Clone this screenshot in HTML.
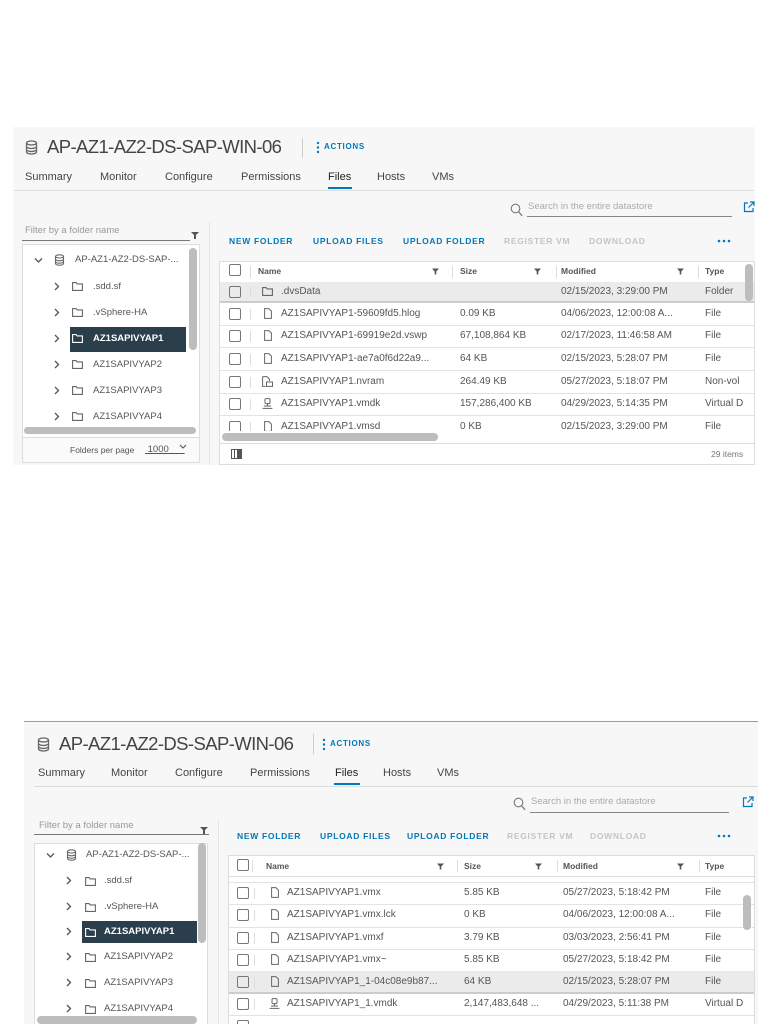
<!DOCTYPE html>
<html><head><meta charset="utf-8"><style>
*{margin:0;padding:0;box-sizing:border-box}
html,body{width:768px;height:1024px;overflow:hidden}
body{background:#fff;position:relative;font-family:"Liberation Sans",Arial,sans-serif;color:#555}
.a{position:absolute;white-space:nowrap}
.t{position:absolute;white-space:nowrap;font-size:10px;line-height:12px;color:#555}
.tab{position:absolute;white-space:nowrap;font-size:11px;line-height:14px;color:#444}
.tb{position:absolute;white-space:nowrap;font-size:8.5px;line-height:10px;font-weight:bold;letter-spacing:.7px;color:#0079b8}
.tb.g{color:#c4c4c4}
.h{position:absolute;white-space:nowrap;font-size:8.5px;line-height:10px;font-weight:bold;color:#555}
.cb{position:absolute;width:12px;height:12px;border:1px solid #777;border-radius:2px;background:#fff}
.hl{position:absolute;height:1px;background:#e3e3e3}
.vl{position:absolute;width:1px;background:#ddd}
.sb{position:absolute;background:#bdbdbd;border-radius:4px}
.ttl{position:absolute;white-space:nowrap;font-size:18.5px;line-height:22px;color:#444;letter-spacing:-0.6px}
</style></head><body>

<!-- ============ PANEL 1 ============ -->
<div class="a" style="left:13px;top:127px;width:742px;height:338px;background:#f7f7f7"></div>
<svg class="a" style="left:25px;top:140px" width="13" height="15" viewBox="0 0 13 15"><g fill="none" stroke="#666" stroke-width="1.3"><ellipse cx="6.5" cy="3" rx="5" ry="2"/><path d="M1.5 3v9c0 1.1 2.2 2 5 2s5-.9 5-2V3M1.5 6.5c0 1.1 2.2 2 5 2s5-.9 5-2M1.5 9.5c0 1.1 2.2 2 5 2s5-.9 5-2"/></g></svg>
<div class="ttl" style="left:47px;top:136px">AP-AZ1-AZ2-DS-SAP-WIN-06</div>
<div class="vl" style="left:302px;top:138px;height:20px;background:#ccc"></div>
<svg class="a" style="left:316px;top:141px" width="4" height="13"><circle cx="2" cy="2" r="1.2" fill="#0079b8"/><circle cx="2" cy="6.5" r="1.2" fill="#0079b8"/><circle cx="2" cy="11" r="1.2" fill="#0079b8"/></svg>
<div class="tb" style="left:324px;top:142px;font-size:8px">ACTIONS</div>
<div class="tab" style="left:25px;top:170px">Summary</div>
<div class="tab" style="left:100px;top:170px">Monitor</div>
<div class="tab" style="left:165px;top:170px">Configure</div>
<div class="tab" style="left:241px;top:170px">Permissions</div>
<div class="tab" style="left:328px;top:170px;color:#222">Files</div>
<div class="tab" style="left:377px;top:170px">Hosts</div>
<div class="tab" style="left:432px;top:170px">VMs</div>
<div class="a" style="left:328px;top:187px;width:24px;height:2px;background:#0079b8"></div>
<div class="hl" style="left:14px;top:190px;width:740px;background:#ddd"></div>
<svg class="a" style="left:510px;top:203px" width="13" height="14"><circle cx="5.5" cy="5.5" r="4.3" fill="none" stroke="#777" stroke-width="1.1"/><path d="M8.6 8.8l3.5 4" stroke="#777" stroke-width="1.2"/></svg>
<div class="t" style="left:528px;top:201px;color:#aaa;font-size:9.5px">Search in the entire datastore</div>
<div class="hl" style="left:527px;top:216px;width:205px;background:#888"></div>
<svg class="a" style="left:743px;top:201px" width="12" height="12"><path d="M5 2H1.5v8.5H10V7" fill="none" stroke="#0079b8" stroke-width="1.2"/><path d="M7 1h4v4M11 1L5.5 6.5" fill="none" stroke="#0079b8" stroke-width="1.2"/></svg>
<div class="t" style="left:25px;top:225px;color:#999;font-size:9.5px">Filter by a folder name</div>
<div class="hl" style="left:22px;top:240px;width:168px;background:#777"></div>
<svg class="a" style="left:191px;top:231px" width="8" height="8"><path d="M0 1h8L5 4v4H3V4z" fill="#555"/></svg>
<div class="a" style="left:22px;top:244px;width:178px;height:219px;border:1px solid #ddd;background:#fff"></div>
<div class="a" style="left:23px;top:437px;width:176px;height:25px;border-top:1px solid #ddd;background:#fafafa"></div>
<svg class="a" style="left:34px;top:257px" width="9" height="7"><path d="M1 1.5l3.5 3.5 3.5-3.5" fill="none" stroke="#555" stroke-width="1.3"/></svg>
<svg class="a" style="left:54px;top:254px" width="11" height="12" viewBox="0 0 13 15"><g fill="none" stroke="#666" stroke-width="1.4"><ellipse cx="6.5" cy="3" rx="5" ry="2"/><path d="M1.5 3v9c0 1.1 2.2 2 5 2s5-.9 5-2V3M1.5 6.5c0 1.1 2.2 2 5 2s5-.9 5-2M1.5 9.5c0 1.1 2.2 2 5 2s5-.9 5-2"/></g></svg>
<div class="t" style="left:75px;top:254px;font-size:9.5px">AP-AZ1-AZ2-DS-SAP-...</div>
<div class="a" style="left:70px;top:327px;width:116px;height:25px;background:#2b3e4b"></div>
<div class="t" style="left:70px;top:444px;font-size:8.5px">Folders per page</div>
<div class="t" style="left:145px;top:444px;font-size:9.5px;text-decoration:underline">&nbsp;1000&nbsp;&nbsp;&nbsp;&nbsp;&nbsp;&nbsp;</div>
<svg class="a" style="left:179px;top:444px" width="8" height="6"><path d="M1 1l3 3 3-3" fill="none" stroke="#555" stroke-width="1.1"/></svg>
<div class="vl" style="left:209px;top:222px;height:243px;background:#e4e4e4"></div>
<div class="tb" style="left:229px;top:236px">NEW FOLDER</div>
<div class="tb" style="left:313px;top:236px">UPLOAD FILES</div>
<div class="tb" style="left:403px;top:236px">UPLOAD FOLDER</div>
<div class="tb g" style="left:504px;top:236px">REGISTER VM</div>
<div class="tb g" style="left:589px;top:236px">DOWNLOAD</div>
<svg class="a" style="left:717px;top:239px" width="14" height="4"><circle cx="2" cy="2" r="1.3" fill="#0079b8"/><circle cx="7" cy="2" r="1.3" fill="#0079b8"/><circle cx="12" cy="2" r="1.3" fill="#0079b8"/></svg>
<div class="a" style="left:219px;top:261px;width:536px;height:204px;border:1px solid #ddd;background:#fff"></div>

<!-- ============ PANEL 2 ============ -->
<div class="a" style="left:24px;top:721px;width:734px;height:303px;background:#f7f7f7;border-top:1px solid #9aa0a6"></div>
<svg class="a" style="left:37px;top:737px" width="13" height="15" viewBox="0 0 13 15"><g fill="none" stroke="#666" stroke-width="1.3"><ellipse cx="6.5" cy="3" rx="5" ry="2"/><path d="M1.5 3v9c0 1.1 2.2 2 5 2s5-.9 5-2V3M1.5 6.5c0 1.1 2.2 2 5 2s5-.9 5-2M1.5 9.5c0 1.1 2.2 2 5 2s5-.9 5-2"/></g></svg>
<div class="ttl" style="left:59px;top:733px">AP-AZ1-AZ2-DS-SAP-WIN-06</div>
<div class="vl" style="left:313px;top:734px;height:20px;background:#ccc"></div>
<svg class="a" style="left:322px;top:738px" width="4" height="13"><circle cx="2" cy="2" r="1.2" fill="#0079b8"/><circle cx="2" cy="6.5" r="1.2" fill="#0079b8"/><circle cx="2" cy="11" r="1.2" fill="#0079b8"/></svg>
<div class="tb" style="left:330px;top:739px;font-size:8px">ACTIONS</div>
<div class="tab" style="left:38px;top:766px">Summary</div>
<div class="tab" style="left:111px;top:766px">Monitor</div>
<div class="tab" style="left:175px;top:766px">Configure</div>
<div class="tab" style="left:250px;top:766px">Permissions</div>
<div class="tab" style="left:335px;top:766px;color:#222">Files</div>
<div class="tab" style="left:383px;top:766px">Hosts</div>
<div class="tab" style="left:437px;top:766px">VMs</div>
<div class="a" style="left:334px;top:783px;width:26px;height:2px;background:#0079b8"></div>
<div class="hl" style="left:34px;top:786px;width:724px;background:#ddd"></div>
<svg class="a" style="left:513px;top:797px" width="13" height="14"><circle cx="5.5" cy="5.5" r="4.3" fill="none" stroke="#777" stroke-width="1.1"/><path d="M8.6 8.8l3.5 4" stroke="#777" stroke-width="1.2"/></svg>
<div class="t" style="left:531px;top:796px;color:#aaa;font-size:9.5px">Search in the entire datastore</div>
<div class="hl" style="left:530px;top:812px;width:199px;background:#888"></div>
<svg class="a" style="left:742px;top:796px" width="12" height="12"><path d="M5 2H1.5v8.5H10V7" fill="none" stroke="#0079b8" stroke-width="1.2"/><path d="M7 1h4v4M11 1L5.5 6.5" fill="none" stroke="#0079b8" stroke-width="1.2"/></svg>
<div class="t" style="left:39px;top:820px;color:#999;font-size:9.5px">Filter by a folder name</div>
<div class="hl" style="left:34px;top:834px;width:175px;background:#777"></div>
<svg class="a" style="left:200px;top:826px" width="8" height="8"><path d="M0 1h8L5 4v4H3V4z" fill="#555"/></svg>
<div class="a" style="left:34px;top:843px;width:174px;height:181px;border:1px solid #ddd;border-bottom:none;background:#fff"></div>
<svg class="a" style="left:46px;top:852px" width="9" height="7"><path d="M1 1.5l3.5 3.5 3.5-3.5" fill="none" stroke="#555" stroke-width="1.3"/></svg>
<svg class="a" style="left:66px;top:849px" width="11" height="12" viewBox="0 0 13 15"><g fill="none" stroke="#666" stroke-width="1.4"><ellipse cx="6.5" cy="3" rx="5" ry="2"/><path d="M1.5 3v9c0 1.1 2.2 2 5 2s5-.9 5-2V3M1.5 6.5c0 1.1 2.2 2 5 2s5-.9 5-2M1.5 9.5c0 1.1 2.2 2 5 2s5-.9 5-2"/></g></svg>
<div class="t" style="left:86px;top:849px;font-size:9.5px">AP-AZ1-AZ2-DS-SAP-...</div>
<div class="a" style="left:82px;top:921px;width:115px;height:22px;background:#2b3e4b"></div>
<div class="sb" style="left:198px;top:843px;width:8px;height:100px"></div>
<div class="vl" style="left:218px;top:820px;height:204px;background:#e4e4e4"></div>
<div class="tb" style="left:237px;top:831px">NEW FOLDER</div>
<div class="tb" style="left:320px;top:831px">UPLOAD FILES</div>
<div class="tb" style="left:407px;top:831px">UPLOAD FOLDER</div>
<div class="tb g" style="left:507px;top:831px">REGISTER VM</div>
<div class="tb g" style="left:590px;top:831px">DOWNLOAD</div>
<svg class="a" style="left:717px;top:834px" width="14" height="4"><circle cx="2" cy="2" r="1.3" fill="#0079b8"/><circle cx="7" cy="2" r="1.3" fill="#0079b8"/><circle cx="12" cy="2" r="1.3" fill="#0079b8"/></svg>
<div class="a" style="left:228px;top:855px;width:527px;height:169px;border:1px solid #ddd;border-bottom:none;background:#fff"></div>

<!-- tree 1 rows -->
<svg class="a" style="left:54px;top:282px" width="6" height="9"><path d="M1 1l3.5 3.5L1 8" fill="none" stroke="#555" stroke-width="1.3"/></svg>
<svg class="a" style="left:72px;top:282px" width="11" height="9"><path d="M.6 .6h3.5l1 1.3h5.3v6.5H.6z" fill="none" stroke="#666" stroke-width="1.1"/></svg>
<div class="t" style="left:93px;top:281px;font-size:9.5px">.sdd.sf</div>
<svg class="a" style="left:54px;top:308px" width="6" height="9"><path d="M1 1l3.5 3.5L1 8" fill="none" stroke="#555" stroke-width="1.3"/></svg>
<svg class="a" style="left:72px;top:308px" width="11" height="9"><path d="M.6 .6h3.5l1 1.3h5.3v6.5H.6z" fill="none" stroke="#666" stroke-width="1.1"/></svg>
<div class="t" style="left:93px;top:307px;font-size:9.5px">.vSphere-HA</div>
<svg class="a" style="left:54px;top:334px" width="6" height="9"><path d="M1 1l3.5 3.5L1 8" fill="none" stroke="#555" stroke-width="1.3"/></svg>
<svg class="a" style="left:72px;top:334px" width="11" height="9"><path d="M.6 .6h3.5l1 1.3h5.3v6.5H.6z" fill="none" stroke="#fff" stroke-width="1.1"/></svg>
<div class="t" style="left:93px;top:333px;font-size:9.5px;color:#fff;font-weight:bold">AZ1SAPIVYAP1</div>
<svg class="a" style="left:54px;top:360px" width="6" height="9"><path d="M1 1l3.5 3.5L1 8" fill="none" stroke="#555" stroke-width="1.3"/></svg>
<svg class="a" style="left:72px;top:360px" width="11" height="9"><path d="M.6 .6h3.5l1 1.3h5.3v6.5H.6z" fill="none" stroke="#666" stroke-width="1.1"/></svg>
<div class="t" style="left:93px;top:359px;font-size:9.5px">AZ1SAPIVYAP2</div>
<svg class="a" style="left:54px;top:386px" width="6" height="9"><path d="M1 1l3.5 3.5L1 8" fill="none" stroke="#555" stroke-width="1.3"/></svg>
<svg class="a" style="left:72px;top:386px" width="11" height="9"><path d="M.6 .6h3.5l1 1.3h5.3v6.5H.6z" fill="none" stroke="#666" stroke-width="1.1"/></svg>
<div class="t" style="left:93px;top:385px;font-size:9.5px">AZ1SAPIVYAP3</div>
<svg class="a" style="left:54px;top:412px" width="6" height="9"><path d="M1 1l3.5 3.5L1 8" fill="none" stroke="#555" stroke-width="1.3"/></svg>
<svg class="a" style="left:72px;top:412px" width="11" height="9"><path d="M.6 .6h3.5l1 1.3h5.3v6.5H.6z" fill="none" stroke="#666" stroke-width="1.1"/></svg>
<div class="t" style="left:93px;top:411px;font-size:9.5px">AZ1SAPIVYAP4</div>
<div class="a" style="left:23px;top:424px;width:176px;height:13px;background:#fff"></div>
<div class="sb" style="left:24px;top:427px;width:172px;height:7px"></div>
<div class="sb" style="left:189px;top:248px;width:8px;height:102px"></div>

<!-- tree 2 rows -->
<svg class="a" style="left:66px;top:876px" width="6" height="9"><path d="M1 1l3.5 3.5L1 8" fill="none" stroke="#555" stroke-width="1.3"/></svg>
<svg class="a" style="left:85px;top:877px" width="11" height="9"><path d="M.6 .6h3.5l1 1.3h5.3v6.5H.6z" fill="none" stroke="#666" stroke-width="1.1"/></svg>
<div class="t" style="left:104px;top:875px;font-size:9.5px">.sdd.sf</div>
<svg class="a" style="left:66px;top:902px" width="6" height="9"><path d="M1 1l3.5 3.5L1 8" fill="none" stroke="#555" stroke-width="1.3"/></svg>
<svg class="a" style="left:85px;top:903px" width="11" height="9"><path d="M.6 .6h3.5l1 1.3h5.3v6.5H.6z" fill="none" stroke="#666" stroke-width="1.1"/></svg>
<div class="t" style="left:104px;top:901px;font-size:9.5px">.vSphere-HA</div>
<svg class="a" style="left:66px;top:927px" width="6" height="9"><path d="M1 1l3.5 3.5L1 8" fill="none" stroke="#555" stroke-width="1.3"/></svg>
<svg class="a" style="left:85px;top:928px" width="11" height="9"><path d="M.6 .6h3.5l1 1.3h5.3v6.5H.6z" fill="none" stroke="#fff" stroke-width="1.1"/></svg>
<div class="t" style="left:104px;top:926px;font-size:9.5px;color:#fff;font-weight:bold">AZ1SAPIVYAP1</div>
<svg class="a" style="left:66px;top:952px" width="6" height="9"><path d="M1 1l3.5 3.5L1 8" fill="none" stroke="#555" stroke-width="1.3"/></svg>
<svg class="a" style="left:85px;top:953px" width="11" height="9"><path d="M.6 .6h3.5l1 1.3h5.3v6.5H.6z" fill="none" stroke="#666" stroke-width="1.1"/></svg>
<div class="t" style="left:104px;top:951px;font-size:9.5px">AZ1SAPIVYAP2</div>
<svg class="a" style="left:66px;top:978px" width="6" height="9"><path d="M1 1l3.5 3.5L1 8" fill="none" stroke="#555" stroke-width="1.3"/></svg>
<svg class="a" style="left:85px;top:979px" width="11" height="9"><path d="M.6 .6h3.5l1 1.3h5.3v6.5H.6z" fill="none" stroke="#666" stroke-width="1.1"/></svg>
<div class="t" style="left:104px;top:977px;font-size:9.5px">AZ1SAPIVYAP3</div>
<svg class="a" style="left:66px;top:1004px" width="6" height="9"><path d="M1 1l3.5 3.5L1 8" fill="none" stroke="#555" stroke-width="1.3"/></svg>
<svg class="a" style="left:85px;top:1005px" width="11" height="9"><path d="M.6 .6h3.5l1 1.3h5.3v6.5H.6z" fill="none" stroke="#666" stroke-width="1.1"/></svg>
<div class="t" style="left:104px;top:1003px;font-size:9.5px">AZ1SAPIVYAP4</div>
<div class="sb" style="left:37px;top:1016px;width:160px;height:8px"></div>

<!-- TABLE 1 content -->
<div class="a" style="left:220px;top:262px;width:534px;height:202px;overflow:hidden">
 <div style="position:absolute;left:-220px;top:-262px;width:768px;height:464px">
  <div class="cb" style="left:229px;top:264px"></div>
  <div class="vl" style="left:250px;top:266px;height:12px"></div>
  <div class="h" style="left:258px;top:266px">Name</div>
  <svg class="a" style="left:432px;top:268px" width="7" height="7"><path d="M0 .5h7L4.3 3.5v3H2.7v-3z" fill="#555"/></svg>
  <div class="vl" style="left:452px;top:266px;height:12px"></div>
  <div class="h" style="left:460px;top:266px">Size</div>
  <svg class="a" style="left:534px;top:268px" width="7" height="7"><path d="M0 .5h7L4.3 3.5v3H2.7v-3z" fill="#555"/></svg>
  <div class="vl" style="left:556px;top:266px;height:12px"></div>
  <div class="h" style="left:561px;top:266px">Modified</div>
  <svg class="a" style="left:677px;top:268px" width="7" height="7"><path d="M0 .5h7L4.3 3.5v3H2.7v-3z" fill="#555"/></svg>
  <div class="vl" style="left:698px;top:266px;height:12px"></div>
  <div class="h" style="left:705px;top:266px">Type</div>
  <div class="hl" style="left:219px;top:282px;width:536px"></div>
  <div class="a" style="left:219px;top:282px;width:536px;height:21px;background:#ebebeb;border-bottom:2px solid #ccc"></div>
  <div class="cb" style="left:229px;top:286px;background:#ebebeb"></div><div class="vl" style="left:250px;top:287px;height:11px"></div>
  <svg class="a" style="left:262px;top:287px" width="11" height="9"><path d="M.6 .6h3.5l1 1.3h5.3v6.5H.6z" fill="none" stroke="#666" stroke-width="1.1"/></svg>
  <div class="t" style="left:281px;top:286px">.dvsData</div>
  <div class="t" style="left:561px;top:286px">02/15/2023, 3:29:00 PM</div>
  <div class="t" style="left:705px;top:286px">Folder</div>

  <div class="cb" style="left:229px;top:308px"></div><div class="vl" style="left:250px;top:309px;height:11px"></div>
  <svg class="a" style="left:264px;top:308px" width="8" height="11"><path d="M.6.6h4.3l2.5 2.5v7.3H.6z" fill="none" stroke="#666" stroke-width="1"/></svg>
  <div class="t" style="left:281px;top:308px">AZ1SAPIVYAP1-59609fd5.hlog</div>
  <div class="t" style="left:460px;top:308px">0.09 KB</div>
  <div class="t" style="left:561px;top:308px">04/06/2023, 12:00:08 A...</div>
  <div class="t" style="left:705px;top:308px">File</div>
  <div class="hl" style="left:219px;top:325px;width:536px"></div>

  <div class="cb" style="left:229px;top:330px"></div><div class="vl" style="left:250px;top:331px;height:11px"></div>
  <svg class="a" style="left:264px;top:330px" width="8" height="11"><path d="M.6.6h4.3l2.5 2.5v7.3H.6z" fill="none" stroke="#666" stroke-width="1"/></svg>
  <div class="t" style="left:281px;top:330px">AZ1SAPIVYAP1-69919e2d.vswp</div>
  <div class="t" style="left:460px;top:330px">67,108,864 KB</div>
  <div class="t" style="left:561px;top:330px">02/17/2023, 11:46:58 AM</div>
  <div class="t" style="left:705px;top:330px">File</div>
  <div class="hl" style="left:219px;top:347px;width:536px"></div>

  <div class="cb" style="left:229px;top:353px"></div><div class="vl" style="left:250px;top:354px;height:11px"></div>
  <svg class="a" style="left:264px;top:353px" width="8" height="11"><path d="M.6.6h4.3l2.5 2.5v7.3H.6z" fill="none" stroke="#666" stroke-width="1"/></svg>
  <div class="t" style="left:281px;top:353px">AZ1SAPIVYAP1-ae7a0f6d22a9...</div>
  <div class="t" style="left:460px;top:353px">64 KB</div>
  <div class="t" style="left:561px;top:353px">02/15/2023, 5:28:07 PM</div>
  <div class="t" style="left:705px;top:353px">File</div>
  <div class="hl" style="left:219px;top:370px;width:536px"></div>

  <div class="cb" style="left:229px;top:376px"></div><div class="vl" style="left:250px;top:377px;height:11px"></div>
  <svg class="a" style="left:262px;top:376px" width="11" height="11"><path d="M.6.6h4.3l2.5 2.5v2M.6.6v9.8h3" fill="none" stroke="#666" stroke-width="1"/><rect x="4.5" y="6" width="6" height="4.4" fill="none" stroke="#666" stroke-width="1"/></svg>
  <div class="t" style="left:281px;top:376px">AZ1SAPIVYAP1.nvram</div>
  <div class="t" style="left:460px;top:376px">264.49 KB</div>
  <div class="t" style="left:561px;top:376px">05/27/2023, 5:18:07 PM</div>
  <div class="t" style="left:705px;top:376px">Non-vol</div>
  <div class="hl" style="left:219px;top:393px;width:536px"></div>

  <div class="cb" style="left:229px;top:398px"></div><div class="vl" style="left:250px;top:399px;height:11px"></div>
  <svg class="a" style="left:262px;top:398px" width="11" height="11"><rect x="3" y=".6" width="5" height="5" rx="1" fill="none" stroke="#666" stroke-width="1"/><path d="M5.5 5.6v2M.6 10.4h9.8M2 8h7" fill="none" stroke="#666" stroke-width="1"/></svg>
  <div class="t" style="left:281px;top:398px">AZ1SAPIVYAP1.vmdk</div>
  <div class="t" style="left:460px;top:398px">157,286,400 KB</div>
  <div class="t" style="left:561px;top:398px">04/29/2023, 5:14:35 PM</div>
  <div class="t" style="left:705px;top:398px">Virtual D</div>
  <div class="hl" style="left:219px;top:415px;width:536px"></div>

  <div class="cb" style="left:229px;top:421px"></div><div class="vl" style="left:250px;top:422px;height:11px"></div>
  <svg class="a" style="left:264px;top:421px" width="8" height="11"><path d="M.6.6h4.3l2.5 2.5v7.3H.6z" fill="none" stroke="#666" stroke-width="1"/></svg>
  <div class="t" style="left:281px;top:421px">AZ1SAPIVYAP1.vmsd</div>
  <div class="t" style="left:460px;top:421px">0 KB</div>
  <div class="t" style="left:561px;top:421px">02/15/2023, 3:29:00 PM</div>
  <div class="t" style="left:705px;top:421px">File</div>

  <div class="a" style="left:219px;top:431px;width:536px;height:12px;background:#fff"></div>
  <div class="sb" style="left:222px;top:433px;width:216px;height:8px"></div>
  <div class="a" style="left:219px;top:443px;width:536px;height:21px;border-top:1px solid #ddd;background:#fff"></div>
  <svg class="a" style="left:231px;top:449px" width="11" height="10"><rect x=".5" y=".5" width="10" height="9" fill="none" stroke="#555"/><rect x="6" y="1" width="4" height="8" fill="#555"/><path d="M3.5 1v8" stroke="#555"/></svg>
  <div class="t" style="left:711px;top:448px;font-size:8.5px;color:#777">29 items</div>
  <div class="sb" style="left:745px;top:264px;width:8px;height:37px"></div>
 </div>
</div>

<!-- TABLE 2 content -->
<div class="a" style="left:229px;top:856px;width:525px;height:168px;overflow:hidden">
 <div style="position:absolute;left:-229px;top:-856px;width:768px;height:1024px">
  <div class="cb" style="left:237px;top:859px"></div>
  <div class="vl" style="left:252px;top:860px;height:12px"></div>
  <div class="h" style="left:266px;top:861px">Name</div>
  <svg class="a" style="left:437px;top:863px" width="7" height="7"><path d="M0 .5h7L4.3 3.5v3H2.7v-3z" fill="#555"/></svg>
  <div class="vl" style="left:457px;top:860px;height:12px"></div>
  <div class="h" style="left:464px;top:861px">Size</div>
  <svg class="a" style="left:535px;top:863px" width="7" height="7"><path d="M0 .5h7L4.3 3.5v3H2.7v-3z" fill="#555"/></svg>
  <div class="vl" style="left:557px;top:860px;height:12px"></div>
  <div class="h" style="left:563px;top:861px">Modified</div>
  <svg class="a" style="left:677px;top:863px" width="7" height="7"><path d="M0 .5h7L4.3 3.5v3H2.7v-3z" fill="#555"/></svg>
  <div class="vl" style="left:699px;top:860px;height:12px"></div>
  <div class="h" style="left:705px;top:861px">Type</div>
  <div class="hl" style="left:228px;top:876px;width:527px;background:#ddd"></div>
  <div class="hl" style="left:228px;top:882px;width:527px"></div>

  <div class="cb" style="left:237px;top:887px"></div><div class="vl" style="left:254px;top:888px;height:11px"></div>
  <svg class="a" style="left:271px;top:887px" width="8" height="11"><path d="M.6.6h4.3l2.5 2.5v7.3H.6z" fill="none" stroke="#666" stroke-width="1"/></svg>
  <div class="t" style="left:287px;top:887px">AZ1SAPIVYAP1.vmx</div>
  <div class="t" style="left:464px;top:887px">5.85 KB</div>
  <div class="t" style="left:563px;top:887px">05/27/2023, 5:18:42 PM</div>
  <div class="t" style="left:705px;top:887px">File</div>
  <div class="hl" style="left:228px;top:904px;width:527px"></div>

  <div class="cb" style="left:237px;top:909px"></div><div class="vl" style="left:254px;top:910px;height:11px"></div>
  <svg class="a" style="left:271px;top:909px" width="8" height="11"><path d="M.6.6h4.3l2.5 2.5v7.3H.6z" fill="none" stroke="#666" stroke-width="1"/></svg>
  <div class="t" style="left:287px;top:909px">AZ1SAPIVYAP1.vmx.lck</div>
  <div class="t" style="left:464px;top:909px">0 KB</div>
  <div class="t" style="left:563px;top:909px">04/06/2023, 12:00:08 A...</div>
  <div class="t" style="left:705px;top:909px">File</div>
  <div class="hl" style="left:228px;top:927px;width:527px"></div>

  <div class="cb" style="left:237px;top:932px"></div><div class="vl" style="left:254px;top:933px;height:11px"></div>
  <svg class="a" style="left:271px;top:932px" width="8" height="11"><path d="M.6.6h4.3l2.5 2.5v7.3H.6z" fill="none" stroke="#666" stroke-width="1"/></svg>
  <div class="t" style="left:287px;top:932px">AZ1SAPIVYAP1.vmxf</div>
  <div class="t" style="left:464px;top:932px">3.79 KB</div>
  <div class="t" style="left:563px;top:932px">03/03/2023, 2:56:41 PM</div>
  <div class="t" style="left:705px;top:932px">File</div>
  <div class="hl" style="left:228px;top:949px;width:527px"></div>

  <div class="cb" style="left:237px;top:954px"></div><div class="vl" style="left:254px;top:955px;height:11px"></div>
  <svg class="a" style="left:271px;top:954px" width="8" height="11"><path d="M.6.6h4.3l2.5 2.5v7.3H.6z" fill="none" stroke="#666" stroke-width="1"/></svg>
  <div class="t" style="left:287px;top:954px">AZ1SAPIVYAP1.vmx~</div>
  <div class="t" style="left:464px;top:954px">5.85 KB</div>
  <div class="t" style="left:563px;top:954px">05/27/2023, 5:18:42 PM</div>
  <div class="t" style="left:705px;top:954px">File</div>

  <div class="a" style="left:228px;top:971px;width:527px;height:23px;background:#ebebeb;border-bottom:2px solid #ccc"></div>
  <div class="cb" style="left:237px;top:976px;background:#ebebeb"></div><div class="vl" style="left:254px;top:977px;height:11px"></div>
  <svg class="a" style="left:271px;top:976px" width="8" height="11"><path d="M.6.6h4.3l2.5 2.5v7.3H.6z" fill="none" stroke="#666" stroke-width="1"/></svg>
  <div class="t" style="left:287px;top:976px">AZ1SAPIVYAP1_1-04c08e9b87...</div>
  <div class="t" style="left:464px;top:976px">64 KB</div>
  <div class="t" style="left:563px;top:976px">02/15/2023, 5:28:07 PM</div>
  <div class="t" style="left:705px;top:976px">File</div>

  <div class="cb" style="left:237px;top:998px"></div><div class="vl" style="left:254px;top:999px;height:11px"></div>
  <svg class="a" style="left:269px;top:998px" width="11" height="11"><rect x="3" y=".6" width="5" height="5" rx="1" fill="none" stroke="#666" stroke-width="1"/><path d="M5.5 5.6v2M.6 10.4h9.8M2 8h7" fill="none" stroke="#666" stroke-width="1"/></svg>
  <div class="t" style="left:287px;top:998px">AZ1SAPIVYAP1_1.vmdk</div>
  <div class="t" style="left:464px;top:998px">2,147,483,648 ...</div>
  <div class="t" style="left:563px;top:998px">04/29/2023, 5:11:38 PM</div>
  <div class="t" style="left:705px;top:998px">Virtual D</div>
  <div class="hl" style="left:228px;top:1015px;width:527px"></div>
  <div class="a" style="left:237px;top:1020px;width:12px;height:4px;border:1px solid #777;border-bottom:none;border-radius:2px 2px 0 0"></div>
  <div class="sb" style="left:743px;top:895px;width:8px;height:35px"></div>
 </div>
</div>
</body></html>
